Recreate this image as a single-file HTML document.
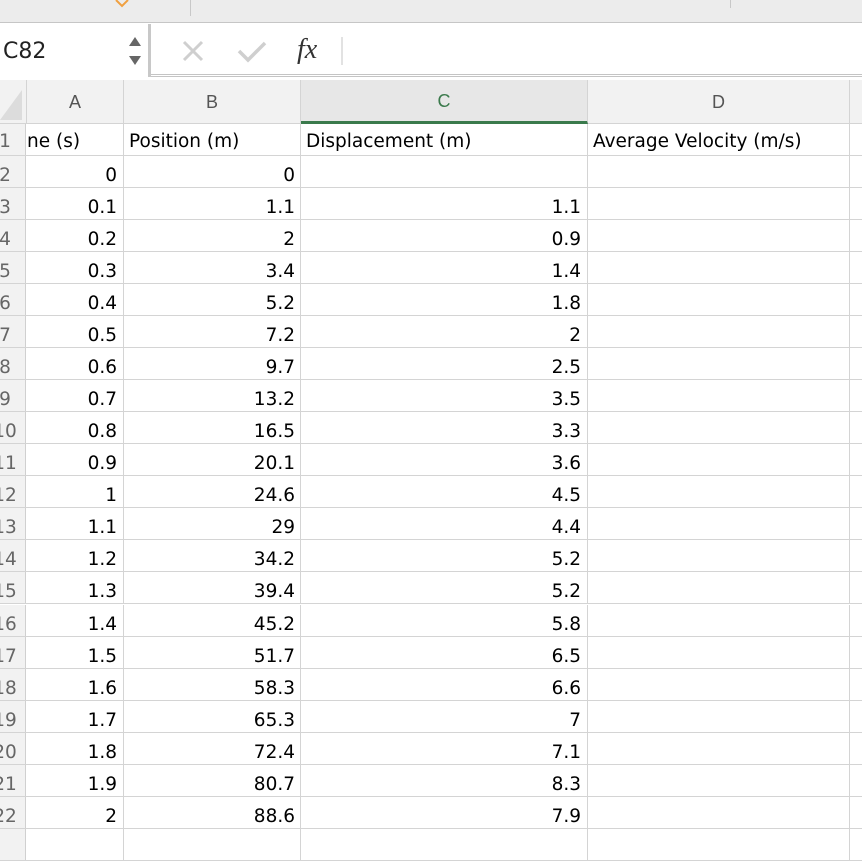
<!DOCTYPE html>
<html><head><meta charset="utf-8"><style>
*{margin:0;padding:0;box-sizing:border-box}
body{width:862px;height:838px;overflow:hidden;background:#fff;font-family:"DejaVu Sans",sans-serif;position:relative}
.abs{position:absolute}
.top{left:0;top:0;width:862px;height:23px;background:#ececec;border-bottom:1px solid #c6c6c6}
.fb{left:0;top:23px;width:862px;height:54px;background:#fff;border-bottom:3px double #c4c4c4}
.hdr{left:0;top:80px;width:862px;height:44px;background:#f2f2f2;border-bottom:1px solid #d4d4d4}
.ch{position:absolute;top:80px;height:44px;line-height:44px;text-align:center;font-size:18px;color:#555;border-right:1px solid #d4d4d4;font-family:"Liberation Sans",sans-serif}
.row{position:absolute;left:0;width:862px;height:32px;border-bottom:1px solid #d4d4d4;font-size:18.5px;color:#000}
.rh{position:absolute;left:0;top:0;width:26px;height:31px;background:#f2f2f2;border-right:1px solid #d0d0d0;overflow:hidden;color:#666;white-space:nowrap}
.rh span{position:absolute;left:-20px;width:50px;text-align:center;top:0;line-height:40px}
.c{position:absolute;top:0;height:31px;line-height:40px;white-space:nowrap;overflow:hidden;border-right:1px solid #d4d4d4}
.a{left:27px;width:97px;text-align:right;padding-right:6px}
.b{left:124px;width:177px;text-align:right;padding-right:5px}
.cc{left:301px;width:287px;text-align:right;padding-right:6px}
.d{left:588px;width:262px}
.l{text-align:left;padding-left:5px}
.al{text-align:left;padding-left:0;padding-right:0}
.r1 .c,.r1 .rh span{line-height:36px}
</style></head><body>
<div class="abs top"></div>
<div class="abs" style="left:190px;top:0;width:1px;height:16px;background:#c8c8c8"></div>
<div class="abs" style="left:730px;top:0;width:1px;height:8px;background:#c8c8c8"></div>
<svg class="abs" style="left:112px;top:0" width="20" height="10"><path d="M4 0 L10 6 L16 0" stroke="#f0a040" stroke-width="2" fill="none"/></svg>
<div class="abs fb"></div>
<div class="abs" style="left:0;top:24px;width:151px;height:53px;background:#fff;border-right:3px solid #c8c8c8"></div>
<div class="abs" style="left:3px;top:39px;font-size:22px;color:#222">C82</div>
<svg class="abs" style="left:126px;top:33px" width="18" height="36"><path d="M3 13 L9 4 L15 13Z" fill="#666"/><path d="M3 23 L9 32 L15 23Z" fill="#666"/></svg>
<svg class="abs" style="left:180px;top:38px" width="30" height="26"><path d="M4 4 L22 22 M22 4 L4 22" stroke="#cfcfcf" stroke-width="3"/></svg>
<svg class="abs" style="left:236px;top:38px" width="34" height="26"><path d="M3 13 L12 22 L29 5" stroke="#cfcfcf" stroke-width="3.5" fill="none"/></svg>
<div class="abs" style="left:297px;top:34px;font-family:'Liberation Serif',serif;font-style:italic;font-size:28px;color:#333">fx</div>
<div class="abs" style="left:341px;top:37px;width:2px;height:28px;background:#e2e2e2"></div>
<div class="abs hdr"></div>
<svg class="abs" style="left:0;top:82px" width="24" height="40"><path d="M22 8 L22 38 L0 38 Z" fill="#dcdcdc"/></svg>
<div class="abs" style="left:26px;top:80px;width:1px;height:44px;background:#d4d4d4"></div>
<div class="ch" style="left:27px;width:97px">A</div>
<div class="ch" style="left:124px;width:177px">B</div>
<div class="ch" style="left:301px;width:287px;background:#e7e7e7;color:#3b7a4c;border-bottom:3px solid #3a7a4c;height:44px;line-height:42px">C</div>
<div class="ch" style="left:588px;width:262px">D</div>

<div class="row r1" style="top:124px"><div class="rh"><span>1</span></div><div class="c a al">ne (s)</div><div class="c b l">Position (m)</div><div class="c cc l">Displacement (m)</div><div class="c d l">Average Velocity (m/s)</div></div>
<div class="row" style="top:156px"><div class="rh"><span>2</span></div><div class="c a">0</div><div class="c b">0</div><div class="c cc"></div><div class="c d"></div></div>
<div class="row" style="top:188px"><div class="rh"><span>3</span></div><div class="c a">0.1</div><div class="c b">1.1</div><div class="c cc">1.1</div><div class="c d"></div></div>
<div class="row" style="top:220px"><div class="rh"><span>4</span></div><div class="c a">0.2</div><div class="c b">2</div><div class="c cc">0.9</div><div class="c d"></div></div>
<div class="row" style="top:252px"><div class="rh"><span>5</span></div><div class="c a">0.3</div><div class="c b">3.4</div><div class="c cc">1.4</div><div class="c d"></div></div>
<div class="row" style="top:284px"><div class="rh"><span>6</span></div><div class="c a">0.4</div><div class="c b">5.2</div><div class="c cc">1.8</div><div class="c d"></div></div>
<div class="row" style="top:316px"><div class="rh"><span>7</span></div><div class="c a">0.5</div><div class="c b">7.2</div><div class="c cc">2</div><div class="c d"></div></div>
<div class="row" style="top:348px"><div class="rh"><span>8</span></div><div class="c a">0.6</div><div class="c b">9.7</div><div class="c cc">2.5</div><div class="c d"></div></div>
<div class="row" style="top:380px"><div class="rh"><span>9</span></div><div class="c a">0.7</div><div class="c b">13.2</div><div class="c cc">3.5</div><div class="c d"></div></div>
<div class="row" style="top:412px"><div class="rh"><span>10</span></div><div class="c a">0.8</div><div class="c b">16.5</div><div class="c cc">3.3</div><div class="c d"></div></div>
<div class="row" style="top:444px"><div class="rh"><span>11</span></div><div class="c a">0.9</div><div class="c b">20.1</div><div class="c cc">3.6</div><div class="c d"></div></div>
<div class="row" style="top:476px"><div class="rh"><span>12</span></div><div class="c a">1</div><div class="c b">24.6</div><div class="c cc">4.5</div><div class="c d"></div></div>
<div class="row" style="top:508px"><div class="rh"><span>13</span></div><div class="c a">1.1</div><div class="c b">29</div><div class="c cc">4.4</div><div class="c d"></div></div>
<div class="row" style="top:540px"><div class="rh"><span>14</span></div><div class="c a">1.2</div><div class="c b">34.2</div><div class="c cc">5.2</div><div class="c d"></div></div>
<div class="row" style="top:572px"><div class="rh"><span>15</span></div><div class="c a">1.3</div><div class="c b">39.4</div><div class="c cc">5.2</div><div class="c d"></div></div>
<div class="row" style="top:605px"><div class="rh"><span>16</span></div><div class="c a">1.4</div><div class="c b">45.2</div><div class="c cc">5.8</div><div class="c d"></div></div>
<div class="row" style="top:637px"><div class="rh"><span>17</span></div><div class="c a">1.5</div><div class="c b">51.7</div><div class="c cc">6.5</div><div class="c d"></div></div>
<div class="row" style="top:669px"><div class="rh"><span>18</span></div><div class="c a">1.6</div><div class="c b">58.3</div><div class="c cc">6.6</div><div class="c d"></div></div>
<div class="row" style="top:701px"><div class="rh"><span>19</span></div><div class="c a">1.7</div><div class="c b">65.3</div><div class="c cc">7</div><div class="c d"></div></div>
<div class="row" style="top:733px"><div class="rh"><span>20</span></div><div class="c a">1.8</div><div class="c b">72.4</div><div class="c cc">7.1</div><div class="c d"></div></div>
<div class="row" style="top:765px"><div class="rh"><span>21</span></div><div class="c a">1.9</div><div class="c b">80.7</div><div class="c cc">8.3</div><div class="c d"></div></div>
<div class="row" style="top:797px"><div class="rh"><span>22</span></div><div class="c a">2</div><div class="c b">88.6</div><div class="c cc">7.9</div><div class="c d"></div></div>
<div class="row" style="top:829px"><div class="rh"></div><div class="c a"></div><div class="c b"></div><div class="c cc"></div><div class="c d"></div></div>
</body></html>
